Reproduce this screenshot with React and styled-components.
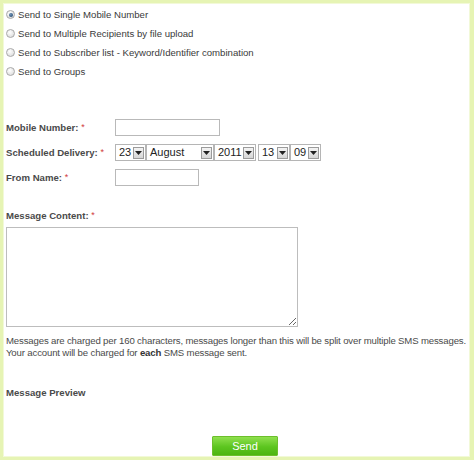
import React, { useState } from "react";
import styled, { createGlobalStyle } from "styled-components";

const GlobalStyle = createGlobalStyle`
  html, body {
    margin: 0;
    padding: 0;
    background: #ffffff;
  }
  body {
    font-family: "Liberation Sans", Arial, sans-serif;
    font-size: 9.6px;
    color: #444444;
  }
`;

const options = [
  "Send to Single Mobile Number",
  "Send to Multiple Recipients by file upload",
  "Send to Subscriber list - Keyword/Identifier combination",
  "Send to Groups",
];

export default function App() {
  const [choice, setChoice] = useState(0);

  return (
    <>
      <GlobalStyle />
      <Frame>
        <RadioList>
          {options.map((label, i) => (
            <RadioRow key={label} onClick={() => setChoice(i)}>
              <Radio $checked={choice === i} />
              <span>{label}</span>
            </RadioRow>
          ))}
        </RadioList>

        <Fields>
          <FieldRow>
            <Label>
              Mobile Number: <Req>*</Req>
            </Label>
            <TextInput $width={105} />
          </FieldRow>
          <FieldRow>
            <Label>
              Scheduled Delivery: <Req>*</Req>
            </Label>
            <SelectGroup>
              <FakeSelect value="23" width={31} />
              <FakeSelect value="August" width={68} />
              <FakeSelect value="2011" width={42} />
            </SelectGroup>
            <SelectGroup>
              <FakeSelect value="13" width={32} />
              <FakeSelect value="09" width={31} />
            </SelectGroup>
          </FieldRow>
          <FieldRow>
            <Label>
              From Name: <Req>*</Req>
            </Label>
            <TextInput $width={84} />
          </FieldRow>
        </Fields>

        <BlockLabel>
          Message Content: <Req>*</Req>
        </BlockLabel>
        <MessageBox />

        <Notice>
          Messages are charged per 160 characters, messages longer than this
          will be split over multiple SMS messages.
          <br />
          Your account will be charged for <b>each</b> SMS message sent.
        </Notice>

        <PreviewTitle>Message Preview</PreviewTitle>

        <ButtonBar>
          <SendButton type="button">Send</SendButton>
        </ButtonBar>
      </Frame>
    </>
  );
}

function FakeSelect({ value, width }) {
  return (
    <SelectBox style={{ width }}>
      <SelectValue>{value}</SelectValue>
      <ArrowBox>
        <svg width="7" height="4" viewBox="0 0 7 4">
          <path d="M0 0h7L3.5 4z" fill="#222" />
        </svg>
      </ArrowBox>
    </SelectBox>
  );
}

const Frame = styled.div`
  box-sizing: border-box;
  width: 474px;
  height: 460px;
  border: 3px solid #e6f4b4;
  border-right-width: 4px;
  padding: 2px 3px 0 3px;
  display: flex;
  flex-direction: column;
  background: #ffffff;
  box-shadow: inset 0 0 0 1px #f2f9d8;
`;

const RadioList = styled.div`
  display: flex;
  flex-direction: column;
`;

const RadioRow = styled.label`
  display: flex;
  align-items: center;
  height: 19px;
  gap: 3px;
  color: #3a3a3a;
  cursor: pointer;
`;

const Radio = styled.span`
  box-sizing: border-box;
  width: 9px;
  height: 9px;
  border-radius: 50%;
  border: 1px solid #a9a9a9;
  background: radial-gradient(circle at 40% 35%, #ffffff 0%, #e2e2e2 70%, #cfcfcf 100%);
  position: relative;

  &::after {
    content: "";
    display: ${(p) => (p.$checked ? "block" : "none")};
    position: absolute;
    left: 1.5px;
    top: 1.5px;
    width: 4px;
    height: 4px;
    border-radius: 50%;
    background: radial-gradient(circle at 40% 35%, #6f94b8 0%, #1d3e63 100%);
  }
`;

const Fields = styled.div`
  margin-top: 38px;
  display: flex;
  flex-direction: column;
  gap: 8px;
`;

const FieldRow = styled.div`
  display: flex;
  align-items: center;
  height: 17px;
`;

const Label = styled.span`
  width: 109px;
  font-weight: bold;
  color: #4a4a4a;
  flex-shrink: 0;
  white-space: nowrap;
`;

const Req = styled.span`
  color: #d03a3a;
  font-weight: normal;
  font-size: 9px;
  vertical-align: 1px;
`;

const TextInput = styled.input`
  box-sizing: border-box;
  width: ${(p) => p.$width}px;
  height: 17px;
  border: 1px solid #b9b9b9;
  padding: 0 3px;
  margin: 0;
  font: inherit;
  outline: none;
`;

const SelectGroup = styled.div`
  display: flex;
  margin-right: 2px;
`;

const SelectBox = styled.div`
  box-sizing: border-box;
  height: 17px;
  border: 1px solid #b5b5b5;
  display: flex;
  align-items: center;
  justify-content: space-between;
  padding: 0 1px 0 3px;
  background: #ffffff;
  color: #222222;
  font-size: 11px;
`;

const SelectValue = styled.span`
  line-height: 15px;
`;

const ArrowBox = styled.span`
  box-sizing: border-box;
  width: 11px;
  height: 12px;
  border: 1px solid #9b9b9b;
  background: linear-gradient(#f4f4f4, #d6d6d6);
  display: flex;
  align-items: center;
  justify-content: center;
`;

const BlockLabel = styled.div`
  margin-top: 22px;
  font-weight: bold;
  color: #4a4a4a;
  line-height: 14px;
`;

const MessageBox = styled.textarea`
  box-sizing: border-box;
  margin: 4px 0 0 0;
  width: 292px;
  height: 100px;
  border: 1px solid #bdbdbd;
  resize: both;
  font: inherit;
  outline: none;
`;

const Notice = styled.p`
  margin: 8px 0 0 0;
  line-height: 12px;
  color: #4a4a4a;
  white-space: nowrap;
  letter-spacing: -0.15px;

  b {
    color: #333333;
  }
`;

const PreviewTitle = styled.div`
  margin-top: 27px;
  font-weight: bold;
  color: #4a4a4a;
  line-height: 14px;
`;

const ButtonBar = styled.div`
  margin-top: auto;
  padding-bottom: 1px;
  display: flex;
  justify-content: center;
  padding-left: 17px;
`;

const SendButton = styled.button`
  width: 66px;
  height: 20px;
  border: 1px solid #6cbf2c;
  border-radius: 1px;
  background: linear-gradient(#8fe04e, #5cc51f 55%, #4db512);
  color: #ffffff;
  font-family: "Liberation Sans", Arial, sans-serif;
  font-size: 11px;
  padding: 0;
  cursor: pointer;
`;
